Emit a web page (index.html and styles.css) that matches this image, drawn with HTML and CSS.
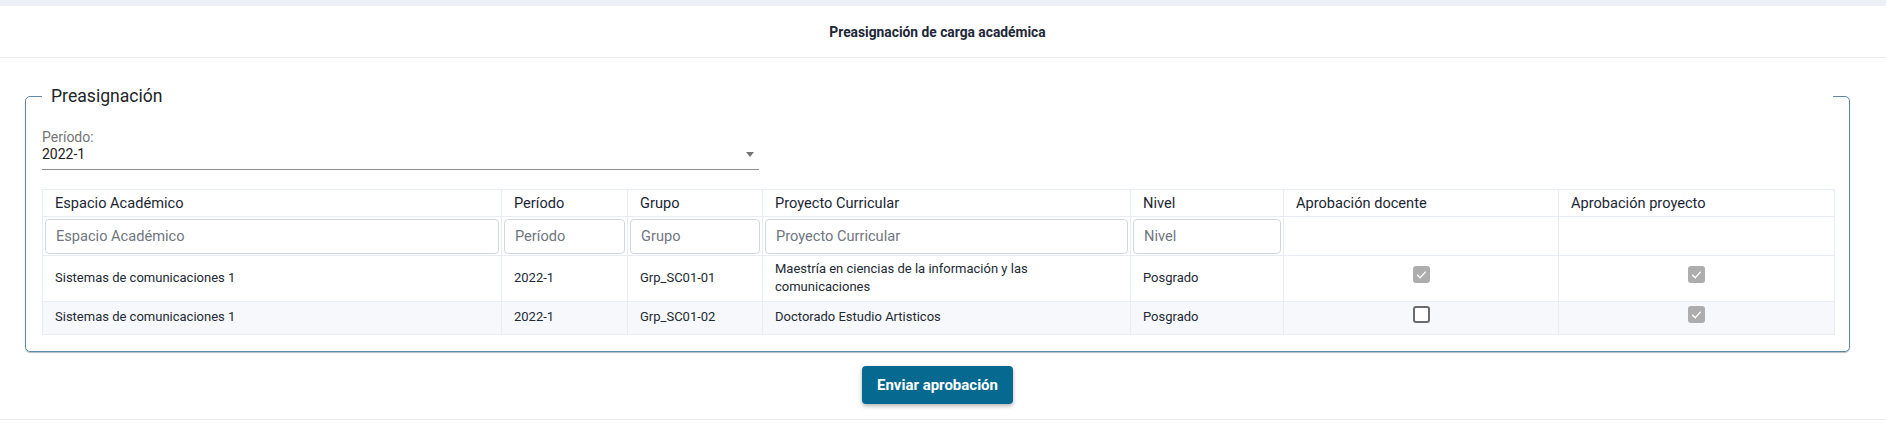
FILE: index.html
```html
<!DOCTYPE html>
<html lang="es">
<head>
<meta charset="utf-8">
<title>Preasignación de carga académica</title>
<link rel="stylesheet" href="styles.css">
</head>
<body>
<div class="topband"></div>
<header class="page-header">
  <h1 class="page-title">Preasignación de carga académica</h1>
</header>
<main class="content">
  <fieldset class="panel">
    <legend class="panel-legend">Preasignación</legend>
    <div class="select-field">
      <div class="select-label">Período:</div>
      <div class="select-row">
        <span class="select-value">2022-1</span>
        <span class="select-arrow"></span>
      </div>
    </div>
    <table class="grid">
      <colgroup>
        <col class="w-espacio">
        <col class="w-periodo">
        <col class="w-grupo">
        <col class="w-proyecto">
        <col class="w-nivel">
        <col class="w-aprob">
        <col class="w-aprob2">
      </colgroup>
      <thead>
        <tr class="head-row">
          <th>Espacio Académico</th>
          <th>Período</th>
          <th>Grupo</th>
          <th>Proyecto Curricular</th>
          <th>Nivel</th>
          <th>Aprobación docente</th>
          <th>Aprobación proyecto</th>
        </tr>
        <tr class="filter-row">
          <td><input class="filter" type="text" placeholder="Espacio Académico"></td>
          <td><input class="filter" type="text" placeholder="Período"></td>
          <td><input class="filter" type="text" placeholder="Grupo"></td>
          <td><input class="filter" type="text" placeholder="Proyecto Curricular"></td>
          <td><input class="filter" type="text" placeholder="Nivel"></td>
          <td></td>
          <td></td>
        </tr>
      </thead>
      <tbody>
        <tr class="data-row">
          <td>Sistemas de comunicaciones 1</td>
          <td>2022-1</td>
          <td>Grp_SC01-01</td>
          <td>Maestría en ciencias de la información y las comunicaciones</td>
          <td>Posgrado</td>
          <td class="cb-cell"><div class="cb-wrap"><span class="cb cb-on"><svg viewBox="0 0 17 17" class="cb-check"><path d="M4.2 8.8 L7.2 11.8 L12.8 5.6"/></svg></span></div></td>
          <td class="cb-cell"><div class="cb-wrap"><span class="cb cb-on"><svg viewBox="0 0 17 17" class="cb-check"><path d="M4.2 8.8 L7.2 11.8 L12.8 5.6"/></svg></span></div></td>
        </tr>
        <tr class="data-row alt">
          <td>Sistemas de comunicaciones 1</td>
          <td>2022-1</td>
          <td>Grp_SC01-02</td>
          <td>Doctorado Estudio Artisticos</td>
          <td>Posgrado</td>
          <td class="cb-cell"><div class="cb-wrap"><span class="cb cb-off"></span></div></td>
          <td class="cb-cell"><div class="cb-wrap"><span class="cb cb-on"><svg viewBox="0 0 17 17" class="cb-check"><path d="M4.2 8.8 L7.2 11.8 L12.8 5.6"/></svg></span></div></td>
        </tr>
      </tbody>
    </table>
  </fieldset>
  <div class="actions">
    <button class="btn-primary" type="button">Enviar aprobación</button>
  </div>
</main>
<footer class="page-footer"></footer>
</body>
</html>
```

FILE: styles.css
```css
* { box-sizing: border-box; }
html, body { margin: 0; padding: 0; background: #ffffff; }
body {
  font-family: Roboto, "Liberation Sans", Arial, sans-serif;
  color: #212529;
  width: 1886px;
}
.topband { height: 6px; background: #edf0f7; }
.page-header {
  height: 52px;
  display: flex;
  align-items: center;
  justify-content: center;
  padding-right: 11px;
  border-bottom: 1px solid #eceef2;
}
.page-title {
  margin: 0;
  font-size: 13.8px;
  font-weight: 700;
  color: #1e2738;
}
.content { padding: 0; }
.panel {
  margin: 28px 36px 0 25px;
  padding: 0 16px 16px;
  border: 1px solid #5e88a5;
  border-radius: 5px;
  box-shadow: 0 1px 1px rgba(40, 70, 95, 0.35);
  min-width: 0;
}
.panel-legend {
  width: 100%;
  padding: 0 9px;
  font-size: 17.6px;
  line-height: 21px;
  color: #212529;
}
.select-field { width: 717px; margin-top: 22px; }
.select-label {
  font-size: 14px;
  line-height: 17px;
  color: #757575;
}
.select-row {
  display: flex;
  align-items: center;
  justify-content: space-between;
  padding-bottom: 6px;
  border-bottom: 1px solid #8f8f8f;
}
.select-value {
  font-size: 14px;
  line-height: 17px;
  color: #212121;
}
.select-arrow {
  width: 0;
  height: 0;
  margin-right: 5px;
  border-left: 4px solid transparent;
  border-right: 4px solid transparent;
  border-top: 5px solid #757575;
}
.grid {
  margin-top: 19px;
  width: 100%;
  table-layout: fixed;
  border-collapse: collapse;
  border: 1px solid #e8ecf4;
}
.w-espacio { width: 459px; }
.w-periodo { width: 126px; }
.w-grupo { width: 135px; }
.w-proyecto { width: 368px; }
.w-nivel { width: 153px; }
.w-aprob { width: 275px; }
.w-aprob2 { width: 276px; }
.grid th, .grid td {
  border: 1px solid #e8ecf4;
  text-align: left;
  vertical-align: middle;
}
.head-row th {
  padding: 3.5px 12px;
  font-size: 14.6px;
  line-height: 18.5px;
  font-weight: 400;
  color: #1b2633;
}
.filter-row td { padding: 2px 2px 1px; }
.filter {
  display: block;
  width: 100%;
  height: 35px;
  padding: 0 10px;
  border: 1px solid #d3d7dd;
  border-radius: 4px;
  font-family: Roboto, "Liberation Sans", Arial, sans-serif;
  font-size: 14.6px;
  color: #212529;
  background: #fff;
}
.filter::placeholder { color: #6f7680; }
.data-row td {
  padding: 4px 12px;
  font-size: 13px;
  line-height: 18.5px;
  color: #222a33;
}
.data-row.alt td { background: #f7f8fc; }
.data-row td.cb-cell { text-align: center; }
.cb-wrap {
  height: 24px;
  display: flex;
  justify-content: center;
  align-items: flex-start;
}
.cb {
  display: block;
  width: 17px;
  height: 17px;
  border-radius: 3px;
}
.cb-on { background: #adadad; }
.cb-off { border: 2px solid #6b6b6b; background: #fff; }
.cb-check {
  display: block;
  width: 17px;
  height: 17px;
  fill: none;
  stroke: #ffffff;
  stroke-width: 1.3;
}
.actions {
  display: flex;
  justify-content: center;
  padding-right: 11px;
  margin: 14px 0 15px;
}
.btn-primary {
  width: 151px;
  height: 38px;
  border: none;
  border-radius: 4px;
  background: #066990;
  color: #ffffff;
  font-family: Roboto, "Liberation Sans", Arial, sans-serif;
  font-size: 15px;
  font-weight: 700;
  box-shadow: 0 2px 4px rgba(0, 0, 0, 0.3);
}
.page-footer { border-top: 1px solid #e9ebef; height: 22px; }
```
